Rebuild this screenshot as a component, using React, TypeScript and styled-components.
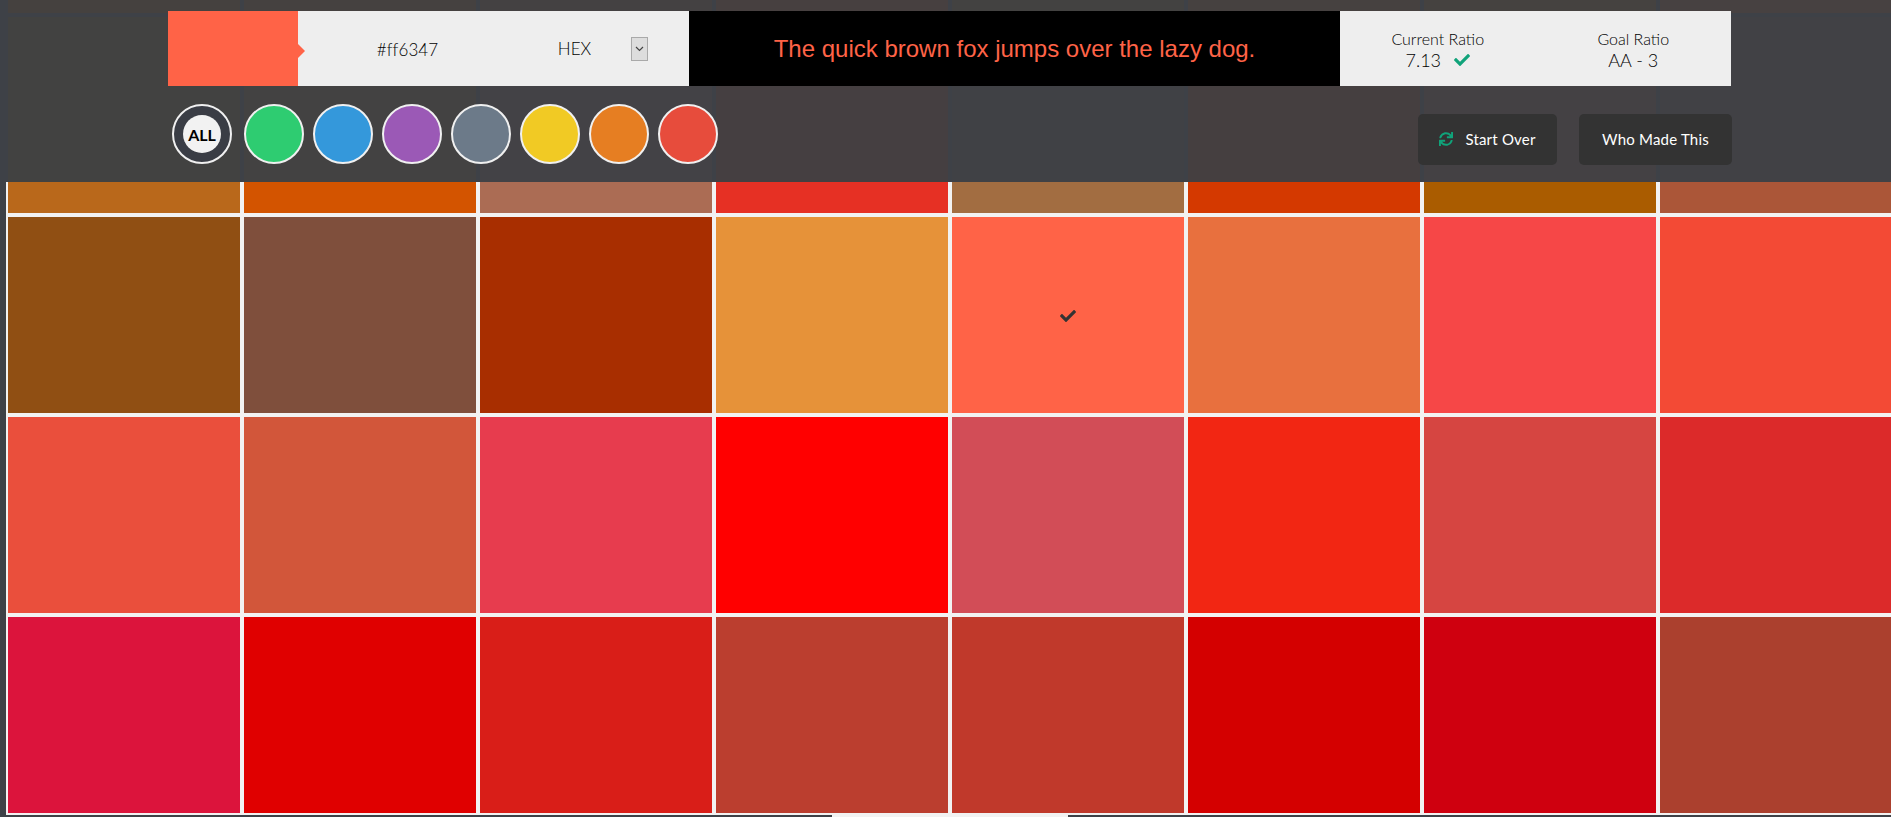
import React from 'react'
import styled, { createGlobalStyle } from 'styled-components'
import { FaCheck, FaSync } from 'react-icons/fa'

const GlobalStyle = createGlobalStyle`
    html, body {
        margin: 0;
        padding: 0;
        height: 100%;
        background: #3e4147;
        font-family: Lato, "Liberation Sans", sans-serif;
        overflow: hidden;
    }
`

const Page = styled.div`
    position: relative;
    width: 1891px;
    height: 817px;
    overflow: hidden;
`

const TileGrid = styled.div`
    display: flex;
    flex-wrap: wrap;
    justify-content: center;
    width: 1888px;
    margin: 15px 0 0 6px;
`

const Tile = styled.div<{ $color: string }>`
    box-sizing: border-box;
    display: flex;
    align-items: center;
    justify-content: center;
    width: 236px;
    height: 200px;
    padding-top: 2px;
    border: 2px solid #f2f2f2;
    background: ${(p) => p.$color};
    color: #333;
    font-size: 16px;
`

const Header = styled.header`
    position: absolute;
    top: 0;
    left: 0;
    right: 0;
    box-sizing: border-box;
    height: 182px;
    padding: 11px 159px 0 168px;
    background: #3e4147;
`

const Backdrop = styled.div`
    position: absolute;
    inset: 0;
    display: grid;
    grid-template-columns: repeat(8, 232px);
    grid-template-rows: 13px 165px;
    gap: 4px;
    padding-left: 8px;
`

const Tint = styled.div<{ $color: string }>`
    background: ${(p) => p.$color};
`

const Preview = styled.div`
    position: relative;
    display: flex;
    height: 75px;
    margin-right: 1px;
`

const ColorPanel = styled.div`
    display: flex;
    align-items: center;
    width: 521px;
    background: #eee;
    color: #000;
    font-weight: 300;
`

const Swatch = styled.div`
    position: relative;
    width: 130px;
    height: 100%;
    background: #ff6347;

    &::after {
        content: '';
        position: absolute;
        top: 33px;
        left: 100%;
        border-style: solid;
        border-width: 7px 0 7px 7px;
        border-color: transparent transparent transparent #ff6347;
    }
`

const HexValue = styled.div`
    width: 219px;
    padding-top: 2px;
    text-align: center;
    font-size: 17px;
    letter-spacing: 0.1px;
`

const FormatLabel = styled.div`
    width: 115px;
    text-align: center;
    font-size: 17px;
`

const SelectArrow = styled.div`
    box-sizing: border-box;
    display: flex;
    align-items: center;
    justify-content: center;
    width: 17px;
    height: 24px;
    margin-left: -1px;
    border: 1px solid #a9a9a9;
    background: #ddd;
`

const Sample = styled.div`
    display: flex;
    align-items: center;
    justify-content: center;
    width: 651px;
    background: #000;
    color: #ff6347;
    font-family: "Liberation Sans", Arial, sans-serif;
    font-size: 24px;
`

const RatioPanel = styled.div`
    display: flex;
    flex: 1;
    background: #eee;
    color: #000;
    font-weight: 300;
`

const RatioColumn = styled.div`
    flex: 1;
    padding-top: 18px;
    text-align: center;
`

const RatioLabel = styled.div`
    font-size: 16px;
    line-height: 20px;
`

const RatioValue = styled.div`
    display: flex;
    align-items: center;
    justify-content: center;
    gap: 13px;
    font-size: 18px;
    line-height: 22px;

    svg {
        color: #10a37a;
        font-size: 16px;
    }
`

const Controls = styled.div`
    position: relative;
    display: flex;
    align-items: flex-start;
    justify-content: space-between;
    margin-top: 18px;
`

const Filters = styled.div`
    display: flex;
    gap: 9px;
    padding-left: 4px;
`

const Filter = styled.div<{ $color: string }>`
    box-sizing: border-box;
    width: 60px;
    height: 60px;
    border: 2px solid #f0f0f0;
    border-radius: 50%;
    background: ${(p) => p.$color};
`

const AllFilter = styled(Filter)`
    display: flex;
    align-items: center;
    justify-content: center;
    margin-right: 3px;
`

const AllLabel = styled.span`
    display: flex;
    align-items: center;
    justify-content: center;
    width: 38px;
    height: 38px;
    border-radius: 50%;
    background: #f2f2f2;
    color: #000;
    font-size: 16px;
    font-weight: 700;
`

const Actions = styled.div`
    display: flex;
    gap: 22px;
    margin-top: 10px;
`

const ActionButton = styled.div<{ $width: number }>`
    display: flex;
    align-items: center;
    justify-content: center;
    gap: 12px;
    width: ${(p) => p.$width}px;
    height: 51px;
    padding-bottom: 2px;
    box-sizing: border-box;
    border-radius: 5px;
    background: #333;
    color: #fff;
    font-size: 15px;
    letter-spacing: 0.2px;

    svg {
        color: #10a37a;
        font-size: 14px;
    }
`

const tintRows = [
    ['#45413f', '#454140', '#444142', '#474040', '#434241', '#464140', '#454240', '#474141'],
    ['#424241', '#434242', '#434246', '#453f41', '#404145', '#453f40', '#444144', '#414145'],
]

const tileColors = [
    '#b9681b', '#d35400', '#ab6c54', '#e63024', '#a26d41', '#d43900', '#aa5c00', '#ab5638',
    '#904f13', '#7f4f3c', '#a82e00', '#e69239', '#ff6347', '#e8703e', '#f64747', '#f34a35',
    '#ea4f3c', '#d2563a', '#e73c4e', '#ff0000', '#d24d57', '#f22613', '#d64541', '#dc2a2a',
    '#dc143c', '#e00000', '#d91e18', '#bb3e2f', '#c0392b', '#d40000', '#cf000f', '#ab402e',
    '#b03a2e',
]

const filterColors = ['#2ecc71', '#3498db', '#9b59b6', '#6c7a89', '#f1ca24', '#e67e22', '#e74c3c']

const SELECTED = '#ff6347'

const App = () => {
    return (
        <Page>
            <GlobalStyle />
            <TileGrid>
                {tileColors.map((color) => (
                    <Tile key={color} $color={color}>
                        {color === SELECTED && <FaCheck />}
                    </Tile>
                ))}
            </TileGrid>
            <Header>
                <Backdrop>
                    {tintRows.flat().map((color, i) => (
                        <Tint key={i} $color={color} />
                    ))}
                </Backdrop>
                <Preview>
                    <ColorPanel>
                        <Swatch />
                        <HexValue>#ff6347</HexValue>
                        <FormatLabel>HEX</FormatLabel>
                        <SelectArrow>
                            <svg width="9" height="6" viewBox="0 0 9 6" fill="none" stroke="#444" strokeWidth="1.2">
                                <path d="M1 1l3.5 3.5L8 1" />
                            </svg>
                        </SelectArrow>
                    </ColorPanel>
                    <Sample>The quick brown fox jumps over the lazy dog.</Sample>
                    <RatioPanel>
                        <RatioColumn>
                            <RatioLabel>Current Ratio</RatioLabel>
                            <RatioValue>
                                7.13 <FaCheck />
                            </RatioValue>
                        </RatioColumn>
                        <RatioColumn>
                            <RatioLabel>Goal Ratio</RatioLabel>
                            <RatioValue>AA - 3</RatioValue>
                        </RatioColumn>
                    </RatioPanel>
                </Preview>
                <Controls>
                    <Filters>
                        <AllFilter $color="#3a3d45">
                            <AllLabel>ALL</AllLabel>
                        </AllFilter>
                        {filterColors.map((color) => (
                            <Filter key={color} $color={color} />
                        ))}
                    </Filters>
                    <Actions>
                        <ActionButton $width={139}>
                            <FaSync /> Start Over
                        </ActionButton>
                        <ActionButton $width={153}>Who Made This</ActionButton>
                    </Actions>
                </Controls>
            </Header>
        </Page>
    )
}

export default App
